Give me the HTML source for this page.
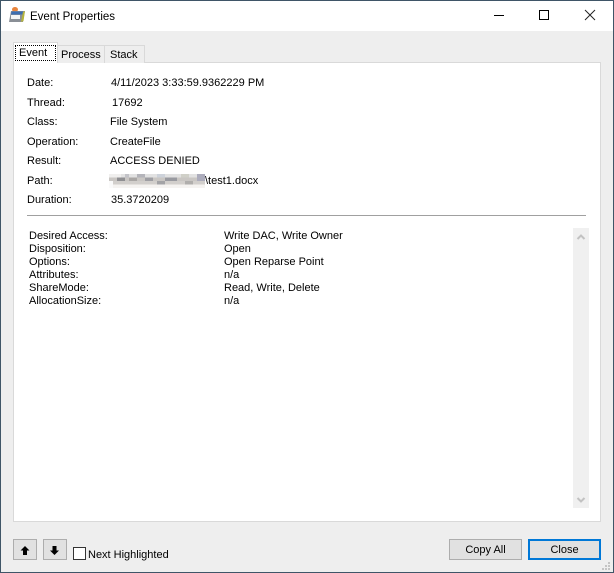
<!DOCTYPE html>
<html><head><meta charset="utf-8"><style>
html,body{margin:0;padding:0;width:614px;height:573px;overflow:hidden;background:#eeeeee}
body{position:relative;font-family:"Liberation Sans",sans-serif;font-size:11px;color:#000}
.a{position:absolute;white-space:nowrap;line-height:14px}
.b{position:absolute;box-sizing:border-box}
.btn{position:absolute;box-sizing:border-box;background:#e1e1e1;border:1px solid #adadad;text-align:center}
</style></head><body>
<div class="b" style="left:0;top:0;width:614px;height:31px;background:#fff"></div>
<svg class="b" style="left:8px;top:6px" width="18" height="17" viewBox="0 0 18 17">
<ellipse cx="7" cy="3.500" rx="3" ry="2.500" fill="#e8843c"/>
<path d="M3 5H17L15 16H1Z" fill="#8a8f96"/>
<path d="M3.500 5.500H15L14.500 8.500H3Z" fill="#3d6db0"/>
<rect x="3" y="9" width="9" height="4" fill="#f4f4f4"/>
<path d="M15 6L17 5L15.500 15L13 16Z" fill="#b5b43c"/>
</svg>
<div class="a" style="left:30px;top:10px;font-size:11.500px">Event Properties</div>
<svg class="b" style="left:490px;top:8px" width="110" height="16" viewBox="0 0 110 16">
<path d="M4 7.500H14" stroke="#000" stroke-width="1"/>
<rect x="49.500" y="2.500" width="9" height="9" fill="none" stroke="#000"/>
<path d="M95 2L105 12M105 2L95 12" stroke="#222" stroke-width="1"/>
</svg>

<div class="b" style="left:13px;top:62px;width:588px;height:460px;background:#fff;border:1px solid #d9d9d9"></div>
<div class="b" style="left:57px;top:45px;width:48px;height:18px;background:#eee;border:1px solid #d9d9d9;border-bottom:0"></div>
<div class="b" style="left:104px;top:45px;width:41px;height:18px;background:#eee;border:1px solid #d9d9d9;border-bottom:0"></div>
<div class="b" style="left:13px;top:42px;width:45px;height:21px;background:#fff;border:1px solid #d9d9d9;border-bottom:0"></div>
<div class="b" style="left:15px;top:45px;width:41px;height:16px;border:1px dotted #000"></div>
<div class="a" style="left:19px;top:46px">Event</div>
<div class="a" style="left:61px;top:48px">Process</div>
<div class="a" style="left:110px;top:48px">Stack</div>

<div class="a" style="left:27px;top:76px">Date:</div><div class="a" style="left:111px;top:76px">4/11/2023 3:33:59.9362229 PM</div>
<div class="a" style="left:27px;top:96px">Thread:</div><div class="a" style="left:112px;top:96px">17692</div>
<div class="a" style="left:27px;top:115px">Class:</div><div class="a" style="left:110px;top:115px">File System</div>
<div class="a" style="left:27px;top:135px">Operation:</div><div class="a" style="left:110px;top:135px">CreateFile</div>
<div class="a" style="left:27px;top:154px">Result:</div><div class="a" style="left:110px;top:154px">ACCESS DENIED</div>
<div class="a" style="left:27px;top:174px">Path:</div>
<svg class="b" style="left:109px;top:174px" width="96" height="14" viewBox="0 0 24 4" preserveAspectRatio="none" shape-rendering="crispEdges">
<rect width="24" height="1" y="0" fill="#e2e2e2"/><rect width="24" height="1" y="1" fill="#c9c6c3"/><rect width="24" height="1" y="2" fill="#d2cfcc"/><rect width="24" height="1" y="3" fill="#f5f3f1"/>
<rect x="0" y="0" width="3" height="1" fill="#f0efee"/><rect x="2" y="1" width="2" height="1" fill="#8f8f92"/><rect x="5" y="1" width="2" height="1" fill="#a9a6a4"/><rect x="4" y="0" width="1" height="1" fill="#c3c3c8"/><rect x="7" y="0" width="2" height="1" fill="#b4b4ba"/><rect x="9" y="1" width="2" height="1" fill="#9e9ea3"/><rect x="12" y="0" width="2" height="1" fill="#cdd2da"/><rect x="12" y="2" width="2" height="1" fill="#a3a3a6"/><rect x="14" y="1" width="3" height="1" fill="#999aa0"/><rect x="18" y="0" width="2" height="1" fill="#d0d0c8"/><rect x="19" y="2" width="2" height="1" fill="#b0aeac"/><rect x="22" y="0" width="2" height="2" fill="#acacbc"/><rect x="0" y="2" width="1" height="2" fill="#fafafa"/>
</svg>
<div class="a" style="left:205px;top:174px">\test1.docx</div>
<div class="a" style="left:27px;top:193px">Duration:</div><div class="a" style="left:111px;top:193px">35.3720209</div>
<div class="b" style="left:27px;top:215px;width:559px;height:1px;background:#a0a0a0"></div>

<div class="a" style="left:29px;top:230px;line-height:13px">Desired Access:<br>Disposition:<br>Options:<br>Attributes:<br>ShareMode:<br>AllocationSize:</div>
<div class="a" style="left:224px;top:230px;line-height:13px">Write DAC, Write Owner<br>Open<br>Open Reparse Point<br>n/a<br>Read, Write, Delete<br>n/a</div>

<div class="b" style="left:573px;top:228px;width:16px;height:280px;background:#f0f0f0"></div>
<svg class="b" style="left:573px;top:228px" width="16" height="280" viewBox="0 0 16 280">
<path d="M4.500 11L8 7.500L11.500 11" fill="none" stroke="#c2c2c2" stroke-width="2"/>
<path d="M4.500 270L8 273.500L11.500 270" fill="none" stroke="#c2c2c2" stroke-width="2"/>
</svg>

<div class="btn" style="left:13px;top:539px;width:24px;height:21px"></div>
<svg class="b" style="left:13px;top:539px" width="24" height="21" viewBox="0 0 24 21"><path d="M12 7L16.500 11.500H14V16H10V11.500H7.500Z" fill="#000"/></svg>
<div class="btn" style="left:43px;top:539px;width:24px;height:21px"></div>
<svg class="b" style="left:43px;top:539px" width="24" height="21" viewBox="0 0 24 21"><path d="M11.500 16L7 11.500H9.500V7H13.500V11.500H16Z" fill="#000"/></svg>
<div class="b" style="left:73px;top:547px;width:13px;height:13px;background:#fff;border:1px solid #333"></div>
<div class="a" style="left:88px;top:548px">Next Highlighted</div>

<div class="btn" style="left:449px;top:539px;width:73px;height:21px;line-height:21px">Copy All</div>
<div class="btn" style="left:528px;top:539px;width:73px;height:21px;line-height:19px;border:2px solid #0078d7">Close</div>
<svg class="b" style="left:602px;top:562px" width="8" height="8" viewBox="0 0 8 8" shape-rendering="crispEdges"><path d="M6 0h2v2H6zM3 3h2v2H3zM6 3h2v2H6zM0 6h2v2H0zM3 6h2v2H3zM6 6h2v2H6z" fill="#c4c4c4"/></svg>

<div class="b" style="left:0;top:0;width:614px;height:573px;border:1px solid #3f5567"></div>
</body></html>
